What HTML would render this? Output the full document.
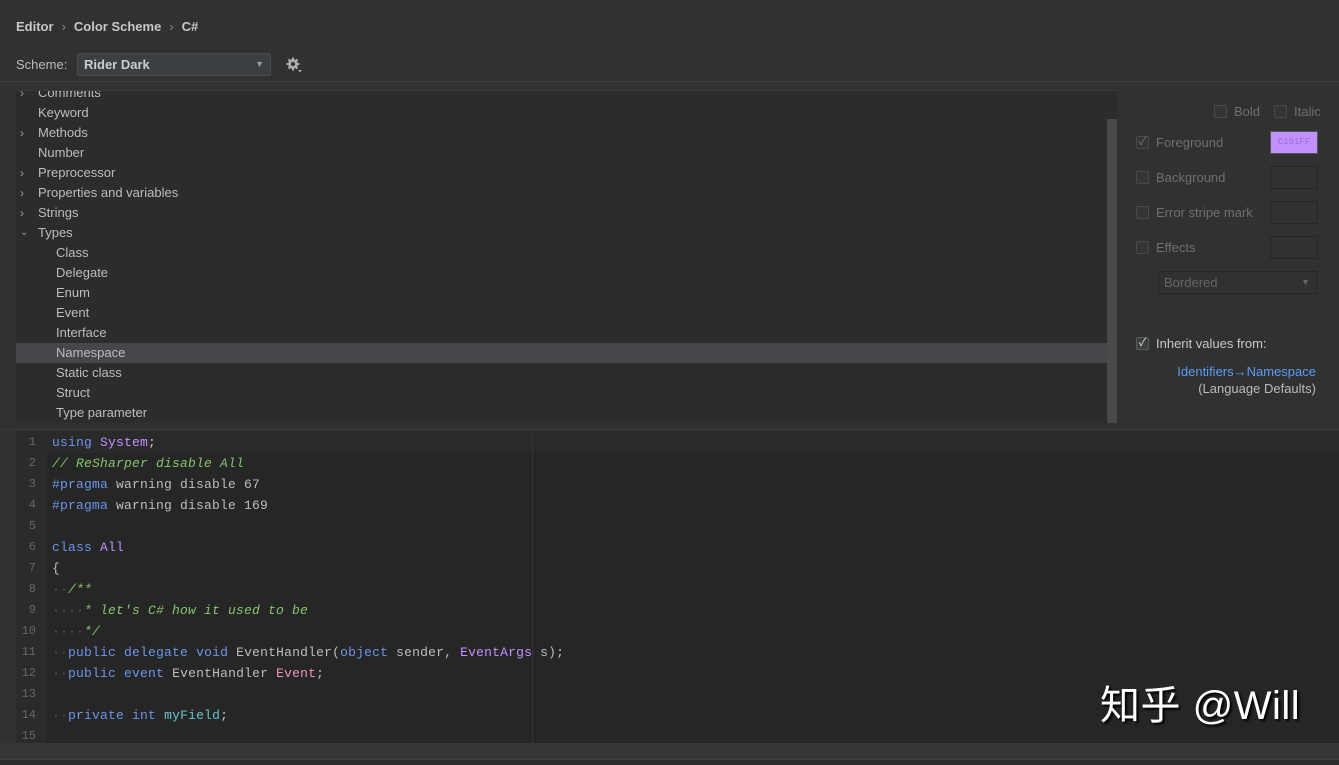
<!DOCTYPE html>
<html><head><meta charset="utf-8"><style>
*{margin:0;padding:0;box-sizing:border-box}
body{width:1339px;height:765px;background:#313131;font-family:"Liberation Sans","Noto Sans CJK SC",sans-serif;color:#bbb;font-size:13px;position:relative;overflow:hidden}
.a{position:absolute}
.crumb{left:16px;top:19px;font-weight:bold;color:#c8c8c8;font-size:13px}
.crumb span{color:#888;font-weight:normal;margin:0 8px}
.tree{left:16px;top:90px;width:1101px;height:333px;background:#2c2c2c;overflow:hidden;border-top:1px solid #3c3c3c}
.row{position:absolute;left:0;width:1091px;height:20px;line-height:20px;color:#bdbdbd}
.row.sel{background:#45474a}
.arr{position:absolute;left:4px;color:#9a9a9a;font-size:12px}
.right label{position:absolute;color:#6f6f6f;font-size:13px}
.cb{position:absolute;width:13px;height:13px;border:1px solid #4a4a4a;background:#353535;border-radius:2px}
.sw{position:absolute;width:48px;height:23px;border:1px solid #262626;background:#313131}
.ed{left:16px;top:431px;width:1323px;height:312px;background:#262626;overflow:hidden}
.gut{position:absolute;left:0;top:0;width:31px;height:312px;background:#2b2b2b}
.ln{position:absolute;width:20px;text-align:right;left:0;font-family:"Liberation Mono",monospace;font-size:12px;color:#666;height:21px;line-height:21px;top:1px}
.cl{position:absolute;left:36px;font-family:"Liberation Mono",monospace;font-size:13px;letter-spacing:0.2px;height:21px;line-height:21px;white-space:pre;color:#bdbdbd;margin-top:1px}
.k{color:#6c95eb}.t{color:#c191ff}.c{color:#85c46c;font-style:italic}.p{color:#6c95eb}.f{color:#66c3cc}.e{color:#ed94c0}.d{color:#555}
</style></head><body>
<div class="a crumb">Editor<span>›</span>Color Scheme<span>›</span>C#</div>
<div class="a" style="left:16px;top:57px;color:#bbb">Scheme:</div>
<div class="a" style="left:77px;top:53px;width:194px;height:23px;background:#3c3f41;border:1px solid #4c4c4c;border-radius:2px;font-weight:bold;color:#ccc;line-height:21px;padding-left:6px">Rider Dark<span style="position:absolute;right:6px;top:0;color:#999;font-size:9px">▼</span></div>
<svg class="a" style="left:286px;top:57px" width="18" height="18" viewBox="0 0 18 18"><g fill="#aaa"><circle cx="7" cy="7" r="5"/><rect x="6" y="0.5" width="2" height="13"/><rect x="0.5" y="6" width="13" height="2"/><rect x="6" y="0.5" width="2" height="13" transform="rotate(45 7 7)"/><rect x="6" y="0.5" width="2" height="13" transform="rotate(-45 7 7)"/></g><circle cx="7" cy="7" r="2" fill="#313131"/><path d="M12 13h4l-2 2.5z" fill="#aaa"/></svg>
<div class="a" style="left:0;top:81px;width:1339px;height:1px;background:#3d3d3d"></div>
<div class="a tree">
<div class="row" style="top:-8px"><span class="arr">›</span><span style="margin-left:22px">Comments</span></div>
<div class="row" style="top:12px"><span style="margin-left:22px">Keyword</span></div>
<div class="row" style="top:32px"><span class="arr">›</span><span style="margin-left:22px">Methods</span></div>
<div class="row" style="top:52px"><span style="margin-left:22px">Number</span></div>
<div class="row" style="top:72px"><span class="arr">›</span><span style="margin-left:22px">Preprocessor</span></div>
<div class="row" style="top:92px"><span class="arr">›</span><span style="margin-left:22px">Properties and variables</span></div>
<div class="row" style="top:112px"><span class="arr">›</span><span style="margin-left:22px">Strings</span></div>
<div class="row" style="top:132px"><span class="arr" style="font-size:10px">⌄</span><span style="margin-left:22px">Types</span></div>
<div class="row" style="top:152px"><span style="margin-left:40px">Class</span></div>
<div class="row" style="top:172px"><span style="margin-left:40px">Delegate</span></div>
<div class="row" style="top:192px"><span style="margin-left:40px">Enum</span></div>
<div class="row" style="top:212px"><span style="margin-left:40px">Event</span></div>
<div class="row" style="top:232px"><span style="margin-left:40px">Interface</span></div>
<div class="row sel" style="top:252px;width:1101px"><span style="margin-left:40px">Namespace</span></div>
<div class="row" style="top:272px"><span style="margin-left:40px">Static class</span></div>
<div class="row" style="top:292px"><span style="margin-left:40px">Struct</span></div>
<div class="row" style="top:312px"><span style="margin-left:40px">Type parameter</span></div>
<div style="position:absolute;left:1091px;top:28px;width:10px;height:305px;background:#4a4a4a"></div>
</div>
<div class="right">
<div class="cb" style="left:1214px;top:105px"></div><label style="left:1234px;top:104px">Bold</label>
<div class="cb" style="left:1274px;top:105px"></div><label style="left:1294px;top:104px">Italic</label>
<div class="cb" style="left:1136px;top:136px;color:#777;font-size:11px;line-height:11px;text-align:center">✓</div><label style="left:1156px;top:135px">Foreground</label>
<div class="a" style="left:1270px;top:131px;width:48px;height:23px;background:#c191ff;border:1px solid #555;color:#9a6ad0;font-family:'Liberation Mono',monospace;font-size:9px;text-align:center;line-height:21px">C191FF</div>
<div class="cb" style="left:1136px;top:171px"></div><label style="left:1156px;top:170px">Background</label><div class="sw" style="left:1270px;top:166px"></div>
<div class="cb" style="left:1136px;top:206px"></div><label style="left:1156px;top:205px">Error stripe mark</label><div class="sw" style="left:1270px;top:201px"></div>
<div class="cb" style="left:1136px;top:241px"></div><label style="left:1156px;top:240px">Effects</label><div class="sw" style="left:1270px;top:236px"></div>
<div class="a" style="left:1158px;top:271px;width:159px;height:23px;border:1px solid #262626;color:#666;line-height:21px;padding-left:5px">Bordered<span style="position:absolute;right:6px;color:#666;font-size:9px">▼</span></div>
<div class="cb" style="left:1136px;top:337px;background:#3c3f41;border-color:#5a5a5a;color:#ddd;font-size:11px;line-height:11px;text-align:center">✓</div>
<div class="a" style="left:1156px;top:336px;color:#c8c8c8">Inherit values from:</div>
<div class="a" style="right:23px;top:364px;color:#589df6">Identifiers→Namespace</div>
<div class="a" style="right:23px;top:381px;color:#bbb">(Language Defaults)</div>
</div>
<div class="a" style="left:0;top:429px;width:1339px;height:1px;background:#3a3a3a"></div>
<div class="a ed">
<div class="gut"></div>
<div style="position:absolute;left:31px;top:0;width:1292px;height:22px;background:#2a2a2a"></div>
<div style="position:absolute;left:516px;top:0;width:1px;height:312px;background:#343434"></div>
<div class="ln" style="top:1px">1</div><div class="ln" style="top:22px">2</div><div class="ln" style="top:43px">3</div><div class="ln" style="top:64px">4</div><div class="ln" style="top:85px">5</div><div class="ln" style="top:106px">6</div><div class="ln" style="top:127px">7</div><div class="ln" style="top:148px">8</div><div class="ln" style="top:169px">9</div><div class="ln" style="top:190px">10</div><div class="ln" style="top:211px">11</div><div class="ln" style="top:232px">12</div><div class="ln" style="top:253px">13</div><div class="ln" style="top:274px">14</div><div class="ln" style="top:295px">15</div>
<div class="cl" style="top:0"><span class="k">using</span> <span class="t">System</span>;</div>
<div class="cl" style="top:21px"><span class="c">// ReSharper disable All</span></div>
<div class="cl" style="top:42px"><span class="p">#pragma</span> warning disable 67</div>
<div class="cl" style="top:63px"><span class="p">#pragma</span> warning disable 169</div>
<div class="cl" style="top:105px"><span class="k">class</span> <span class="t">All</span></div>
<div class="cl" style="top:126px">{</div>
<div class="cl" style="top:147px"><span class="d">··</span><span class="c">/**</span></div>
<div class="cl" style="top:168px"><span class="d">····</span><span class="c">* let's C# how it used to be</span></div>
<div class="cl" style="top:189px"><span class="d">····</span><span class="c">*/</span></div>
<div class="cl" style="top:210px"><span class="d">··</span><span class="k">public</span> <span class="k">delegate</span> <span class="k">void</span> EventHandler(<span class="k">object</span> sender, <span class="t">EventArgs</span> s);</div>
<div class="cl" style="top:231px"><span class="d">··</span><span class="k">public</span> <span class="k">event</span> EventHandler <span class="e">Event</span>;</div>
<div class="cl" style="top:273px"><span class="d">··</span><span class="k">private</span> <span class="k">int</span> <span class="f">myField</span>;</div>
<div class="a" style="left:1084px;top:250px;color:#fff;font-size:40px;line-height:50px;letter-spacing:0.5px;text-shadow:2px 2px 2px #000;font-family:'Liberation Sans','Noto Sans CJK SC',sans-serif">知乎 @Will</div>
</div>
<div class="a" style="left:0;top:743px;width:1339px;height:16px;background:#363636"></div>
<div class="a" style="left:0;top:759px;width:1339px;height:6px;background:#2e2e2e;border-top:1px solid #3e3e3e"></div>
</body></html>
